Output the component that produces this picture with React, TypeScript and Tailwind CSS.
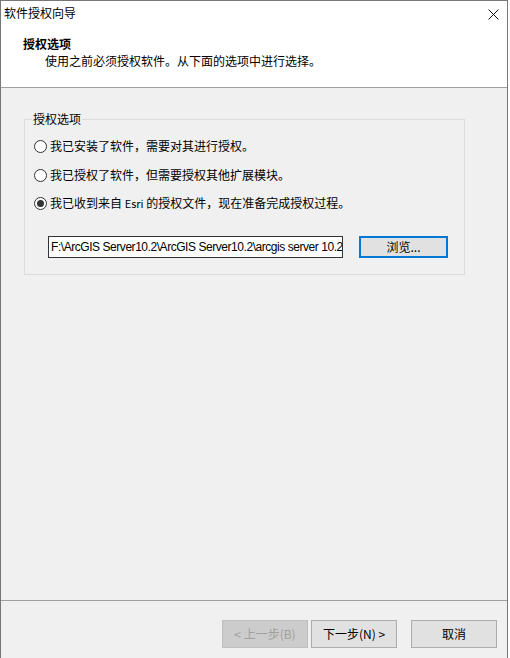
const font = { fontFamily: '"Noto Sans CJK SC", "Noto Sans", sans-serif' };

function Radio({ checked, label }: { checked?: boolean; label: React.ReactNode }) {
  return (
    <div className="flex h-[16px] items-center">
      <span className="flex h-[13px] w-[13px] items-center justify-center rounded-full border border-[#333333] bg-white">
        {checked && <span className="h-[7px] w-[7px] rounded-full bg-[#333333]" />}
      </span>
      <span className="ml-[3px] text-[12px] leading-[16px] text-black">{label}</span>
    </div>
  );
}

export default function App() {
  return (
    <div className="h-[658px] w-[510px] bg-white" style={font}>
      <div className="flex h-[658px] w-[508px] flex-col border-x border-t border-[#777777]">
        {/* header */}
        <div className="h-[86px] bg-white">
          <div className="flex items-start justify-between pt-[4px] pl-[3px] pr-[8px]">
            <span className="text-[12px] leading-[16px] text-black">软件授权向导</span>
            <svg width="11" height="11" viewBox="0 0 11 11" className="mt-[4px]">
              <path d="M0.5 0.5 L10.5 10.5 M10.5 0.5 L0.5 10.5" stroke="#111" strokeWidth="1" />
            </svg>
          </div>
          <div className="mt-[15px] pl-[22px] text-[12px] font-bold leading-[16px] text-black">授权选项</div>
          <div className="mt-[1px] pl-[44px] text-[12px] leading-[16px] text-black">
            使用之前必须授权软件。从下面的选项中进行选择。
          </div>
        </div>
        <div className="h-px bg-[#a0a0a0]" />

        {/* body */}
        <div className="flex-1 bg-[#f0f0f0] pt-[31px] pl-[23px]">
          <div className="relative w-[441px] border border-[#dcdcdc] pt-[18px] pb-[16px] pl-[9px]">
            <span className="absolute -top-[9px] left-[7px] bg-[#f0f0f0] px-px text-[12px] leading-[16px] text-black">
              授权选项
            </span>
            <Radio label="我已安装了软件，需要对其进行授权。" />
            <div className="mt-[13px]">
              <Radio label="我已授权了软件，但需要授权其他扩展模块。" />
            </div>
            <div className="mt-[12px]">
              <Radio
                checked
                label={
                  <>
                    我已收到来自 <span className="text-[11px]">Esri</span> 的授权文件，现在准备完成授权过程。
                  </>
                }
              />
            </div>
            <div className="mt-[25px] ml-[14px] flex items-center">
              <div className="flex h-[22px] w-[295px] items-center overflow-hidden whitespace-nowrap border border-[#333333] bg-white pl-[2px] font-['Liberation_Sans',sans-serif] text-[12px] tracking-[-0.45px] text-black">
                F:\ArcGIS Server10.2\ArcGIS Server10.2\arcgis server 10.2
              </div>
              <button className="ml-[16px] flex h-[22px] w-[89px] items-center justify-center border-2 border-[#0078d7] bg-[#e1e1e1] text-[12px] text-black">
                浏览...
              </button>
            </div>
          </div>
        </div>
        <div className="h-px bg-[#a0a0a0]" />

        {/* footer */}
        <div className="flex h-[57px] items-start bg-[#f0f0f0] pt-[19px] pl-[221px]">
          <button className="flex h-[28px] w-[86px] items-center justify-center border border-[#bfbfbf] bg-[#cccccc] text-[12px] text-[#a0a0a0]">
            &lt; 上一步(B)
          </button>
          <button className="ml-[3px] flex h-[28px] w-[86px] items-center justify-center border border-[#adadad] bg-[#e1e1e1] text-[12px] text-black">
            下一步(N) &gt;
          </button>
          <button className="ml-[14px] flex h-[28px] w-[86px] items-center justify-center border border-[#adadad] bg-[#e1e1e1] text-[12px] text-black">
            取消
          </button>
        </div>
      </div>
    </div>
  );
}
